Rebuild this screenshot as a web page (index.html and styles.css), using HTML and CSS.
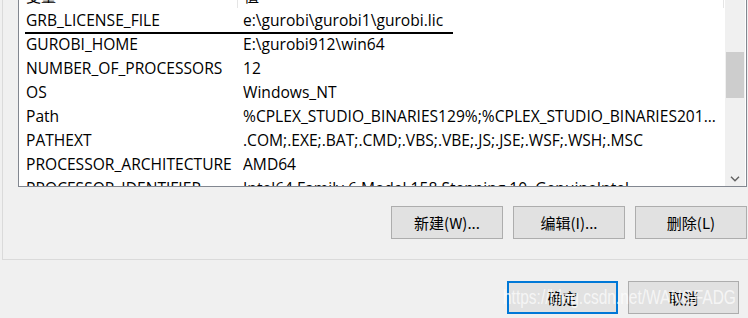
FILE: index.html
```html
<!DOCTYPE html>
<html lang="zh-CN">
<head>
<meta charset="utf-8">
<title>环境变量</title>
<link rel="stylesheet" href="styles.css">
</head>
<body>
<div class="dialog">
  <div class="group">
    <div class="listbox">
      <div class="list">
        <div class="header">
          <div class="hcell name"><span>变量</span></div>
          <div class="hcell value"><span>值</span></div>
        </div>
        <div class="row editing">
          <div class="cell name">GRB_LICENSE_FILE</div>
          <div class="cell value">e:\gurobi\gurobi1\gurobi.lic</div>
        </div>
        <div class="row">
          <div class="cell name">GUROBI_HOME</div>
          <div class="cell value">E:\gurobi912\win64</div>
        </div>
        <div class="row">
          <div class="cell name">NUMBER_OF_PROCESSORS</div>
          <div class="cell value">12</div>
        </div>
        <div class="row">
          <div class="cell name">OS</div>
          <div class="cell value">Windows_NT</div>
        </div>
        <div class="row">
          <div class="cell name">Path</div>
          <div class="cell value">%CPLEX_STUDIO_BINARIES129%;%CPLEX_STUDIO_BINARIES201...</div>
        </div>
        <div class="row">
          <div class="cell name">PATHEXT</div>
          <div class="cell value">.COM;.EXE;.BAT;.CMD;.VBS;.VBE;.JS;.JSE;.WSF;.WSH;.MSC</div>
        </div>
        <div class="row">
          <div class="cell name">PROCESSOR_ARCHITECTURE</div>
          <div class="cell value">AMD64</div>
        </div>
        <div class="row">
          <div class="cell name">PROCESSOR_IDENTIFIER</div>
          <div class="cell value">Intel64 Family 6 Model 158 Stepping 10, GenuineIntel</div>
        </div>
      </div>
      <div class="scrollbar">
        <div class="track">
          <div class="thumb"></div>
        </div>
        <div class="arrow">
          <svg width="10" height="6" viewBox="0 0 10 6"><path d="M1 0.8 L5 4.8 L9 0.8" fill="none" stroke="#606060" stroke-width="1.4"/></svg>
        </div>
      </div>
    </div>
    <div class="actions">
      <button class="btn">新建(W)...</button>
      <button class="btn">编辑(I)...</button>
      <button class="btn">删除(L)</button>
    </div>
  </div>
  <div class="footer">
    <button class="btn primary">确定</button>
    <button class="btn">取消</button>
    <div class="watermark">https://blog.csdn.net/WANGFADG</div>
  </div>
</div>
</body>
</html>
```

FILE: styles.css
```css
* { box-sizing: border-box; }
html, body {
  margin: 0;
  padding: 0;
  background: #f0f0f0;
  width: 748px;
  height: 318px;
  overflow: hidden;
}
body {
  font-family: "Open Sans", "Noto Sans CJK SC", sans-serif;
  color: #000;
}
.dialog {
  position: relative;
  width: 748px;
  height: 318px;
  overflow: hidden;
}
.group {
  margin-left: 2px;
  width: 746px;
  height: 260px;
  border-left: 1px solid #dadada;
  border-bottom: 1px solid #dadada;
  padding-left: 15px;
}
.listbox {
  display: flex;
  width: 729px;
  height: 187px;
  background: #fff;
  border: 1px solid #828790;
  border-top: none;
}
.list {
  flex: 1;
  overflow: hidden;
  font-size: 15.6px;
}
.header {
  display: flex;
  height: 8px;
  overflow: hidden;
}
.hcell {
  height: 8px;
  border-right: 1px solid #e5e5e5;
  padding-left: 7px;
  font-size: 15px;
  color: #000;
}
.hcell span {
  display: block;
  line-height: 20px;
  margin-top: -14px;
  font-family: "Noto Sans CJK SC", sans-serif;
}
.hcell.name { width: 219px; }
.hcell.value { width: 486px; padding-left: 6px; }
.row {
  display: flex;
  height: 24px;
  line-height: 24px;
  white-space: nowrap;
  position: relative;
}
.cell { overflow: hidden; }
.cell.name { width: 224px; padding-left: 7px; }
.cell.value { flex: 1; }
.row.editing::after {
  content: "";
  position: absolute;
  left: 6px;
  width: 428px;
  top: 24px;
  height: 2px;
  background: #000;
}
.scrollbar {
  width: 20px;
  margin-right: 1px;
  display: flex;
  flex-direction: column;
  background: #f0f0f0;
}
.track {
  flex: 1;
  padding-top: 52px;
  padding-left: 1px;
  padding-right: 1px;
}
.thumb {
  height: 46px;
  background: #cdcdcd;
}
.arrow {
  height: 24px;
  display: flex;
  align-items: flex-start;
  justify-content: center;
  padding-top: 14px;
}
.actions {
  display: flex;
  gap: 10px;
  margin-top: 19px;
  width: 729px;
  justify-content: flex-end;
}
.btn {
  width: 112px;
  height: 33px;
  background: #e1e1e1;
  border: 1px solid #adadad;
  font-family: "Noto Sans CJK SC", sans-serif;
  font-size: 15px;
  color: #000;
  padding: 0;
  margin: 0;
}
.footer {
  display: flex;
  gap: 10px;
  margin-top: 21px;
  padding-left: 507px;
}
.btn.primary {
  width: 111px;
  border: 2px solid #0078d7;
}
.footer .btn:last-of-type { width: 111px; }
.watermark {
  position: absolute;
  left: 503px;
  top: 286px;
  font-family: "Liberation Sans", sans-serif;
  font-size: 20px;
  color: rgba(255, 255, 255, 0.7);
  white-space: nowrap;
  transform: scaleX(0.775);
  transform-origin: left center;
  pointer-events: none;
}
```
